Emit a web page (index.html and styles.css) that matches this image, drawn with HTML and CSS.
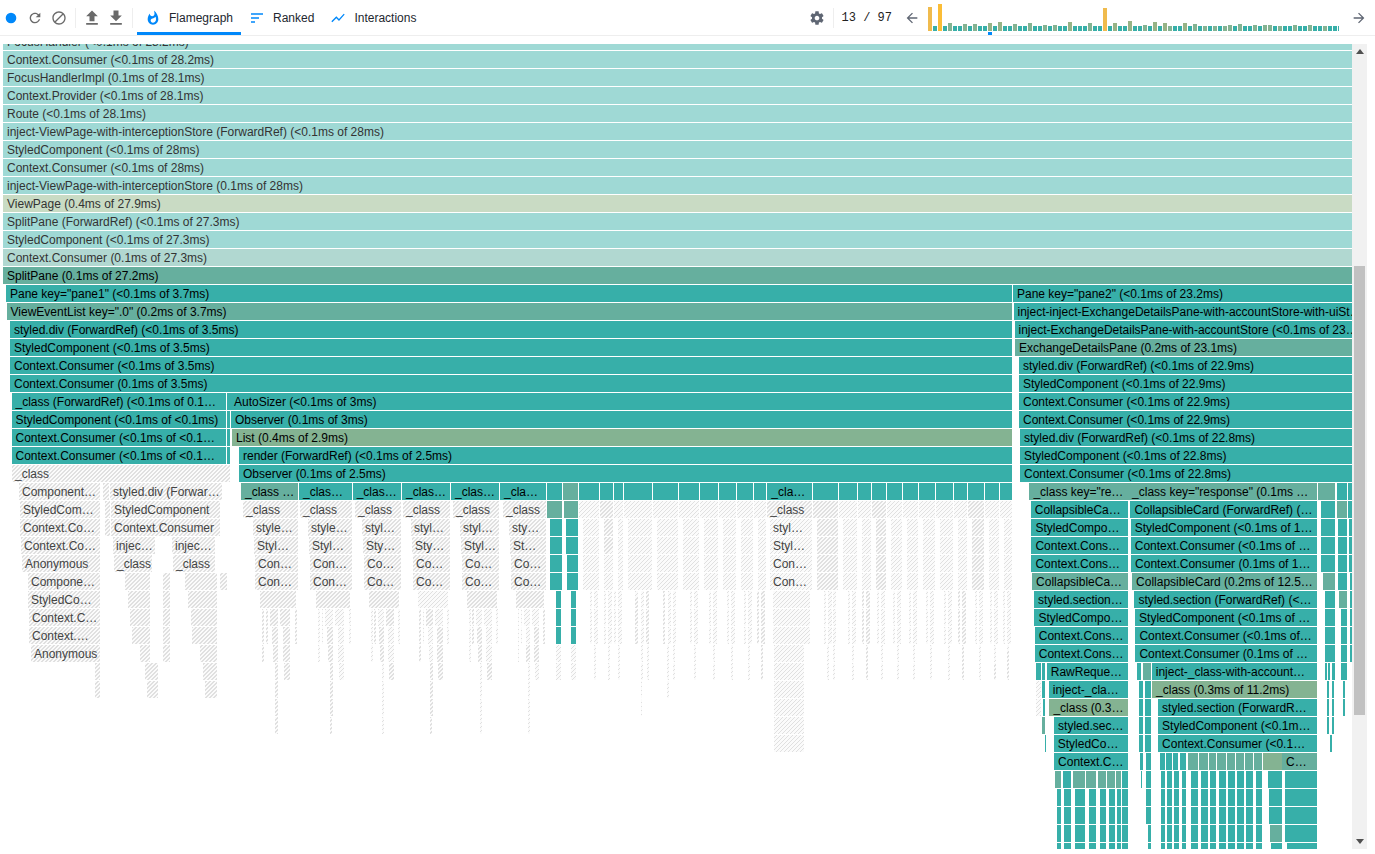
FILE: index.html
```html
<!DOCTYPE html>
<html lang="en">
<head>
<meta charset="utf-8">
<title>Profiler</title>
<link rel="stylesheet" href="styles.css">
</head>
<body>
<div class="app">
  <header class="toolbar">
    <button class="btn btn-first"><svg viewBox="0 0 24 24" class="ic blue"><circle cx="12" cy="12" r="8"/></svg></button>
    <button class="btn"><svg viewBox="0 0 24 24" class="ic gray"><path d="M17.65 6.35C16.2 4.9 14.21 4 12 4c-4.42 0-7.99 3.58-7.99 8s3.57 8 7.99 8c3.73 0 6.84-2.55 7.73-6h-2.08c-.82 2.33-3.04 4-5.65 4-3.31 0-6-2.69-6-6s2.69-6 6-6c1.66 0 3.14.69 4.22 1.78L13 11h7V4l-2.35 2.35z"/></svg></button>
    <button class="btn"><svg viewBox="0 0 24 24" class="ic gray"><path d="M12 2C6.48 2 2 6.48 2 12s4.48 10 10 10 10-4.48 10-10S17.52 2 12 2zM4 12c0-4.42 3.58-8 8-8 1.85 0 3.55.63 4.9 1.69L5.69 16.9C4.63 15.55 4 13.85 4 12zm8 8c-1.85 0-3.55-.63-4.9-1.69L18.31 7.1C19.37 8.45 20 10.15 20 12c0 4.42-3.58 8-8 8z"/></svg></button>
    <span class="sep"></span>
    <button class="btn"><svg viewBox="0 0 24 24" class="ic ic-lg gray"><path d="M9 16h6v-6h4l-7-7-7 7h4zm-4 2h14v2H5z"/></svg></button>
    <button class="btn"><svg viewBox="0 0 24 24" class="ic ic-lg gray"><path d="M19 9h-4V3H9v6H5l7 7 7-7zM5 18v2h14v-2H5z"/></svg></button>
    <span class="sep"></span>
    <div class="tab tab-active"><svg viewBox="0 0 24 24" class="ic blue"><path d="M13.5.67s.74 2.65.74 4.8c0 2.06-1.35 3.73-3.41 3.73-2.07 0-3.63-1.67-3.63-3.73l.03-.36C5.21 7.51 4 10.62 4 14c0 4.42 3.58 8 8 8s8-3.58 8-8C20 8.61 17.41 3.8 13.5.67zM11.71 19c-1.78 0-3.22-1.4-3.22-3.14 0-1.62 1.05-2.76 2.81-3.12 1.77-.36 3.6-1.21 4.62-2.58.39 1.29.59 2.65.59 4.04 0 2.65-2.15 4.8-4.8 4.8z"/></svg><span>Flamegraph</span></div>
    <div class="tab"><svg viewBox="0 0 24 24" class="ic blue"><path d="M3 5h18v2H3zm0 6h12v2H3zm0 6h6v2H3z"/></svg><span>Ranked</span></div>
    <div class="tab"><svg viewBox="0 0 24 24" class="ic blue"><path d="M3.5 18.49l6-6.01 4 4L22 6.92l-1.41-1.41-7.09 7.97-4-4L2 16.99z"/></svg><span>Interactions</span></div>
    <span class="grow"></span>
    <button class="btn"><svg viewBox="0 0 24 24" class="ic slate"><path d="M19.43 12.98c.04-.32.07-.64.07-.98s-.03-.66-.07-.98l2.11-1.65c.19-.15.24-.42.12-.64l-2-3.46c-.12-.22-.39-.3-.61-.22l-2.49 1c-.52-.4-1.08-.73-1.69-.98l-.38-2.65C14.46 2.18 14.25 2 14 2h-4c-.25 0-.46.18-.49.42l-.38 2.65c-.61.25-1.17.59-1.69.98l-2.49-1c-.23-.09-.49 0-.61.22l-2 3.46c-.13.22-.07.49.12.64l2.11 1.65c-.04.32-.07.65-.07.98s.03.66.07.98l-2.11 1.65c-.19.15-.24.42-.12.64l2 3.46c.12.22.39.3.61.22l2.49-1c.52.4 1.08.73 1.69.98l.38 2.65c.03.24.24.42.49.42h4c.25 0 .46-.18.49-.42l.38-2.65c.61-.25 1.17-.59 1.69-.98l2.49 1c.23.09.49 0 .61-.22l2-3.46c.12-.22.07-.49-.12-.64l-2.11-1.65zM12 15.5c-1.93 0-3.5-1.57-3.5-3.5s1.57-3.5 3.5-3.5 3.5 1.57 3.5 3.5-1.57 3.5-3.5 3.5z"/></svg></button>
    <span class="sep"></span>
    <span class="counter">13 / 97</span>
    <button class="btn btn-prev"><svg viewBox="0 0 24 24" class="ic slate"><path d="M20 11H7.83l5.59-5.59L12 4l-8 8 8 8 1.41-1.41L7.83 13H20v-2z"/></svg></button>
    <div class="minimap" id="minimap"><div class="marker"></div></div>
    <button class="btn"><svg viewBox="0 0 24 24" class="ic slate"><path d="M12 4l-1.41 1.41L16.17 11H4v2h12.17l-5.58 5.59L12 20l8-8z"/></svg></button>
  </header>
  <main class="panel">
    <div class="flame"><div class="rows" id="rows"></div></div>
    <div class="scrollbar">
      <span class="arrow arrow-up"></span>
      <span class="thumb"></span>
      <span class="grow"></span>
      <span class="arrow arrow-down"></span>
    </div>
  </main>
</div>
<script src="app.js"></script>
</body>
</html>
```
FILE: styles.css
```css
* { box-sizing: border-box; }
html, body { margin: 0; padding: 0; height: 100%; background: #fff; overflow: hidden; }
body { font-family: "Liberation Sans", Arial, sans-serif; font-size: 12px; color: #000; }
.app { display: flex; flex-direction: column; height: 854px; }
.toolbar { display: flex; align-items: center; height: 36px; flex: none; border-bottom: 1px solid #eee; padding-right: 4px; }
.btn { width: 24px; height: 35px; border: 0; padding: 0; background: none; display: flex; align-items: center; justify-content: center; flex: none; }
.btn-first { margin-left: -1px; }
.btn-prev { margin-right: 4px; }
.ic { width: 16px; height: 16px; flex: none; display: block; }
.ic-lg { width: 20px; height: 20px; }
.ic.blue { fill: #0088fa; }
.ic.gray { fill: #6a6a6a; }
.ic.slate { fill: #5f6673; }
.sep { width: 1px; height: 20px; background: #eee; margin: 0 4px; flex: none; }
.tab { height: 35px; display: flex; align-items: center; padding: 3px 8px 0; gap: 8px; font-size: 12px; color: #23272f; border-bottom: 3px solid transparent; flex: none; }
.tab-active { border-bottom-color: #0088fa; }
.grow { flex: 1; }
.counter { font-family: "Liberation Mono", monospace; font-size: 12px; margin: 0 8px 0 4px; color: #222; white-space: pre; }
.minimap { position: relative; flex: none; width: 419px; height: 35px; display: flex; align-items: flex-end; padding-bottom: 4px; gap: 1px; }
.bar { width: 4px; flex: none; }
.bar-teal { background: #37afa9; }
.bar-sage { background: #84b392; }
.bar-olive { background: #97b386; }
.bar-soft { background: #6fb09c; }
.bar-gold { background: #f0bb4d; }
.bar-amber { background: #fbbd36; }
.bar-thin { width: 1px; }
.marker { position: absolute; left: 60px; bottom: 0; width: 4px; height: 3px; background: #0088fa; }
.panel { display: flex; height: 805px; margin-top: 8px; padding-right: 8px; flex: none; }
.flame { flex: 1; min-width: 0; overflow: hidden; }
.rows { margin-top: -11px; }
.row { position: relative; height: 18px; }
.node { position: absolute; top: 0; height: 17px; line-height: 19px; padding-left: 4px; font-size: 12px; white-space: nowrap; overflow: hidden; }
.k-a { background: #37afa9; }
.k-b { background: #66af9e; }
.k-c { background: #84b392; }
.k-l { background: #9fd9d5; color: #333; }
.k-m { background: #b1d8d1; color: #333; }
.k-n { background: #c9dbc4; color: #333; }
.k-h { padding-left: 3px; color: #444; background: repeating-linear-gradient(-45deg, #e0e0e0 0, #e0e0e0 1px, #fbfbfb 1px, #fbfbfb 2.83px); background-attachment: fixed; }
.scrollbar { width: 15px; flex: none; display: flex; flex-direction: column; background: #f1f1f1; }
.arrow { display: block; width: 0; height: 0; margin: 5px auto; border-left: 4px solid transparent; border-right: 4px solid transparent; flex: none; }
.arrow-up { border-bottom: 5px solid #505050; }
.arrow-down { border-top: 5px solid #505050; }
.thumb { display: block; height: 449px; margin: 207px 2px 0; background: #c1c1c1; flex: none; }
```
FILE: app.js
```js
var rowsData = [];
function add(k, x1, x2, kind, label) {
  (rowsData[k] = rowsData[k] || []).push([x1, x2, kind, label || ""]);
}

/* Full width ancestors */
[
  ["l", "FocusHandler (<0.1ms of 28.2ms)"],
  ["l", "Context.Consumer (<0.1ms of 28.2ms)"],
  ["l", "FocusHandlerImpl (0.1ms of 28.1ms)"],
  ["l", "Context.Provider (<0.1ms of 28.1ms)"],
  ["l", "Route (<0.1ms of 28.1ms)"],
  ["l", "inject-ViewPage-with-interceptionStore (ForwardRef) (<0.1ms of 28ms)"],
  ["l", "StyledComponent (<0.1ms of 28ms)"],
  ["l", "Context.Consumer (<0.1ms of 28ms)"],
  ["l", "inject-ViewPage-with-interceptionStore (0.1ms of 28ms)"],
  ["n", "ViewPage (0.4ms of 27.9ms)"],
  ["l", "SplitPane (ForwardRef) (<0.1ms of 27.3ms)"],
  ["l", "StyledComponent (<0.1ms of 27.3ms)"],
  ["m", "Context.Consumer (0.1ms of 27.3ms)"],
  ["b", "SplitPane (0.1ms of 27.2ms)"]
].forEach(function (r, k) { add(k, 3, 1352, r[0], r[1]); });

/* Two panes */
add(14, 6, 1012, "a", 'Pane key="pane1" (<0.1ms of 3.7ms)');
add(14, 1013, 1352, "a", 'Pane key="pane2" (<0.1ms of 23.2ms)');
add(15, 6.5, 1012, "b", 'ViewEventList key=".0" (0.2ms of 3.7ms)');
add(15, 1013.5, 1352, "a", "inject-inject-ExchangeDetailsPane-with-accountStore-with-uiSt…");
add(16, 10, 1012, "a", "styled.div (ForwardRef) (<0.1ms of 3.5ms)");
add(16, 1014.5, 1352, "a", "inject-ExchangeDetailsPane-with-accountStore (<0.1ms of 23…");
add(17, 10, 1012, "a", "StyledComponent (<0.1ms of 3.5ms)");
add(17, 1015, 1352, "b", "ExchangeDetailsPane (0.2ms of 23.1ms)");
add(18, 10, 1012, "a", "Context.Consumer (<0.1ms of 3.5ms)");
add(18, 1019, 1352, "a", "styled.div (ForwardRef) (<0.1ms of 22.9ms)");
add(19, 10, 1012, "a", "Context.Consumer (0.1ms of 3.5ms)");
add(19, 1019, 1352, "a", "StyledComponent (<0.1ms of 22.9ms)");
add(20, 11.5, 226, "a", "_class (ForwardRef) (<0.1ms of 0.1…");
add(20, 227, 230, "a");
add(20, 230, 1012, "a", "AutoSizer (<0.1ms of 3ms)");
add(20, 1019, 1352, "a", "Context.Consumer (<0.1ms of 22.9ms)");
add(21, 11.5, 226, "a", "StyledComponent (<0.1ms of <0.1ms)");
add(21, 227, 230, "a");
add(21, 231, 1012, "a", "Observer (0.1ms of 3ms)");
add(21, 1019, 1352, "a", "Context.Consumer (<0.1ms of 22.9ms)");
add(22, 11.5, 226, "a", "Context.Consumer (<0.1ms of <0.1…");
add(22, 227, 230, "a");
add(22, 232, 1012, "c", "List (0.4ms of 2.9ms)");
add(22, 1020, 1352, "a", "styled.div (ForwardRef) (<0.1ms of 22.8ms)");
add(23, 11.5, 226, "a", "Context.Consumer (<0.1ms of <0.1…");
add(23, 227, 230, "a");
add(23, 239, 1012, "a", "render (ForwardRef) (<0.1ms of 2.5ms)");
add(23, 1020, 1352, "a", "StyledComponent (<0.1ms of 22.8ms)");
add(24, 12, 230, "h", "_class");
add(24, 239, 1012, "a", "Observer (0.1ms of 2.5ms)");
add(24, 1020, 1352, "a", "Context.Consumer (<0.1ms of 22.8ms)");

/* Left hatched stack */
[
  [25, 19, "Component…", 103, 110, 222, "styled.div (Forwar…"],
  [26, 20, "StyledCom…", 105, 111, 220, "StyledComponent"],
  [27, 20, "Context.Co…", 105, 111, 220, "Context.Consumer"]
].forEach(function (r) {
  add(r[0], r[1], 100, "h", r[2]);
  add(r[0], r[3], r[4] - 1, "h");
  add(r[0], r[4], r[5], "h", r[6]);
});
add(28, 21, 100, "h", "Context.Co…");
add(28, 113, 155, "h", "injec…");
add(28, 172, 215, "h", "injec…");
add(29, 22, 100, "h", "Anonymous");
add(29, 114, 152, "h", "_class");
add(29, 173, 215, "h", "_class");
[
  [30, 28, "Compone…", 125, 185],
  [31, 28, "StyledCo…", 128, 188],
  [32, 29, "Context.C…", 130, 191],
  [33, 29, "Context.…", 132, 192],
  [34, 31, "Anonymous", 140, 200]
].forEach(function (r) {
  add(r[0], r[1], 100, "h", r[2]);
  add(r[0], r[3], 150, "h");
  add(r[0], 163, 170, "h");
  add(r[0], r[4], 217, "h");
});
add(30, 220, 227, "h");
[[35, 145, 203], [36, 147, 205]].forEach(function (r) {
  add(r[0], 95, 100, "h");
  add(r[0], r[1], 158, "h");
  add(r[0], r[2], 217, "h");
});

/* Labelled list items */
var labelled = [
  [241, 298, "_class …", 243, 253, "style…", "Styl…", "Con…", "Con…"],
  [299, 351.7, "_clas…", 300, 308, "style…", "Styl…", "Con…", "Con…"],
  [352.7, 401, "_clas…", 355, 362, "styl…", "Sty…", "Co…", "Co…"],
  [402, 450, "_clas…", 403, 411, "styl…", "Sty…", "Co…", "Co…"],
  [451, 499, "_clas…", 453, 460, "styl…", "Styl…", "Co…", "Co…"],
  [500, 545.7, "_cla…", 503, 509, "sty…", "St…", "Co…", "Co…"]
];
var pat = [
  [[17, 53]],
  [[19, 21], [23, 25], [27, 35], [37, 47], [52, 54]],
  [[19, 21], [23, 25], [29, 35], [40, 47], [52, 54]],
  [[19, 21], [30, 35], [40, 47]],
  [[32, 35], [41, 47]],
  [[32, 35]],
  [[32, 35]],
  [[32, 34.5]]
];
labelled.forEach(function (c) {
  add(25, c[0], c[1], c === labelled[0] ? "b" : "a", c[2]);
  add(26, c[3], c[1], "h", "_class");
  add(27, c[4], c[1], "h", c[5]);
  add(28, c[4] + 1, c[1], "h", c[6]);
  add(29, c[4] + 2, c[1], "h", c[7]);
  add(30, c[4] + 2, c[1], "h", c[8]);
  var scale = (c[1] - c[3]) / 55;
  pat.forEach(function (strips, i) {
    strips.forEach(function (s) {
      add(31 + i, c[3] + s[0] * scale, c[3] + s[1] * scale, "h");
    });
  });
});

/* Two committed columns in the list */
[[546.7, 561.7, 549.5, 556, 560.7], [562.7, 577.7, 566, 570.7, 575.7]].forEach(function (c, i) {
  add(25, c[0], c[1], i ? "b" : "a");
  add(26, i ? 564 : 547, c[1], "b");
  for (var k = 27; k <= 30; k++) add(k, c[2] + (k > 28 ? 0.7 : 0), c[1], "a");
  for (k = 31; k <= 33; k++) add(k, c[3], c[4], "a");
  for (k = 34; k <= 35; k++) add(k, c[3], c[4], "h");
});

/* Unlabelled teal columns with did-not-render children */
[
  [578.7, 599], [600, 612.7], [613.7, 622.7], [623.7, 651.7], [652.7, 678],
  [679, 698.7], [699.7, 717.7], [718.7, 735.7], [736.7, 752.7], [753.7, 766.3],
  [813.3, 838], [839, 857], [858, 871.3], [872.3, 885.7], [886.7, 901.7],
  [902.7, 917.7], [918.7, 935], [936, 953], [954, 967.3], [968.3, 983.7],
  [984.7, 998.7], [999.7, 1011.7]
].forEach(function (c, i) {
  var w = c[1] - c[0], x2 = c[1], k;
  add(25, c[0], x2, "a");
  add(26, c[0], x2, "h");
  for (k = 27; k <= 30; k++) add(k, c[0] + 4, x2, "h");
  for (k = 31; k <= 33; k++) {
    if (w >= 24) {
      add(k, c[0] + w * 0.42, c[0] + w * 0.5, "h");
      add(k, c[0] + w * 0.6, c[0] + w * 0.74, "h");
      add(k, c[0] + w * 0.8, c[0] + w * 0.92, "h");
    } else {
      add(k, x2 - 9, x2 - 7, "h");
      add(k, x2 - 5, x2 - 1, "h");
    }
  }
  for (k = 34; k <= 35; k++) {
    add(k, x2 - 5, x2 - 3, "h");
    if (w >= 24) add(k, x2 - 11, x2 - 9, "h");
  }
  if (i === 3 || i === 4) { add(36, x2 - 11, x2 - 9.5, "h"); }
  if (i === 3) { add(37, x2 - 11, x2 - 9.5, "h"); }
});

/* Labelled column in the middle */
add(25, 767.3, 812.3, "a", "_cla…");
add(26, 767.3, 812.3, "h", "_class");
add(27, 770, 812, "h", "styl…");
add(28, 770, 812, "h", "Styl…");
add(29, 770, 812, "h", "Con…");
add(30, 770, 812, "h", "Con…");
for (var m = 31; m <= 33; m++) add(m, 773, 810, "h");
for (m = 34; m <= 39; m++) add(m, 774, 804, "h");

/* Right side */
function rx(v) { return 1020 + v / 3; }
function rr(k, list, kind) {
  list.forEach(function (s) {
    add(k, rx(s[0]) - (s[3] ? 0.6 : 0), rx(s[1]), s[2] || kind || "a", s[3]);
  });
}
rr(25, [[30, 323, "b", '_class key="re…'], [326, 890, "b", '_class key="response" (0.1ms …'], [893, 945, "b"], [950, 980], [983, 996]]);
rr(26, [[34, 323, "a", "CollapsibleCa…"], [333, 890, "a", "CollapsibleCard (ForwardRef) (…"], [904, 945], [950, 980, "b"], [985, 996]]);
rr(27, [[36, 323, "a", "StyledCompo…"], [334, 890, "a", "StyledComponent (<0.1ms of 1…"], [904, 945], [955, 980], [988, 996]]);
rr(28, [[36, 323, "a", "Context.Cons…"], [334, 890, "a", "Context.Consumer (<0.1ms of …"], [904, 945], [955, 980], [988, 996]]);
rr(29, [[36, 323, "a", "Context.Cons…"], [335, 890, "a", "Context.Consumer (0.1ms of 1…"], [904, 945], [955, 980], [988, 996]]);
rr(30, [[38, 323, "b", "CollapsibleCa…"], [338, 890, "b", "CollapsibleCard (0.2ms of 12.5…"], [908, 945, "b"], [955, 980], [990, 996]]);
rr(31, [[44, 323, "a", "styled.section…"], [345, 890, "a", "styled.section (ForwardRef) (<…"], [914, 945], [958, 980, "b"], [990, 996]]);
rr(32, [[45, 323, "a", "StyledCompo…"], [347, 890, "a", "StyledComponent (<0.1ms of …"], [915, 945], [963, 980], [990, 996]]);
rr(33, [[46, 323, "a", "Context.Cons…"], [348, 890, "a", "Context.Consumer (<0.1ms of…"], [915, 945], [963, 980], [990, 996]]);
rr(34, [[46, 323, "a", "Context.Cons…"], [348, 890, "a", "Context.Consumer (0.1ms of …"], [915, 945], [963, 980], [990, 996]]);
rr(35, [[48, 62], [66, 76], [82, 323, "a", "RawReque…"], [352, 362], [368, 392, "b"], [397, 890, "a", "inject-_class-with-account…"], [916, 920], [925, 930], [935, 945], [963, 980]]);
rr(36, [[48, 64, "h"], [66, 76], [88, 323, "a", "inject-_cla…"], [358, 368], [376, 392], [398, 890, "c", "_class (0.3ms of 11.2ms)"], [922, 928], [935, 942], [968, 975]]);
rr(37, [[48, 64, "h"], [68, 76], [90, 323, "c", "_class (0.3…"], [358, 368], [376, 392], [416, 890, "a", "styled.section (ForwardR…"], [922, 928], [935, 942], [970, 975]]);
rr(38, [[66, 74, "b"], [104, 323, "a", "styled.sec…"], [358, 368], [376, 392], [416, 890, "a", "StyledComponent (<0.1m…"], [922, 928], [935, 942]]);
rr(39, [[75, 78], [103, 323, "a", "StyledCo…"], [358, 368], [376, 392], [416, 890, "a", "Context.Consumer (<0.1…"], [930, 935]]);
rr(40, [[104, 323, "a", "Context.C…"], [360, 368], [378, 392], [420, 434], [437, 455], [459, 475], [479, 499],
  [503, 533, "b"], [536, 563, "b"], [566, 587, "b"], [590, 617, "b"], [620, 644, "b"], [647, 671, "b"], [674, 698, "b"], [701, 727, "b"],
  [730, 785, "c"], [788, 890, "b", "C…"]]);
rr(41, [[106, 123, "b"], [128, 154], [158, 195, "b"], [198, 229, "b"], [233, 259, "b"], [262, 284, "b"], [288, 303, "b"], [306, 323],
  [362, 365], [378, 392], [423, 435], [442, 456], [463, 478], [485, 498], [512, 534], [543, 563], [570, 589], [598, 617], [625, 644], [652, 671], [679, 698], [707, 727], [745, 785], [795, 890]]);
var lowerLeft = [[110, 123], [131, 154], [164, 195], [206, 229], [239, 259], [268, 284], [291, 303], [307, 323]];
var lowerRight = [[423, 435], [442, 456], [463, 478], [485, 498], [512, 534], [543, 563], [570, 589], [598, 617], [625, 644], [652, 671], [679, 698], [707, 727]];
[42, 43, 44, 45].forEach(function (k) {
  rr(k, lowerLeft);
  rr(k, lowerRight);
  rr(k, [k < 44 ? [378, 392] : [385, 392]]);
  rr(k, [k === 44 ? [750, 785, "b"] : k === 45 ? [753, 785] : [747, 785]]);
  rr(k, [k === 45 ? [800, 890] : [795, 890]]);
});

/* Render rows */
var rowsEl = document.getElementById("rows");
rowsData.forEach(function (row) {
  var r = document.createElement("div");
  r.className = "row";
  row.forEach(function (n) {
    var d = document.createElement("div");
    d.className = "node k-" + n[2];
    d.style.left = n[0] + "px";
    d.style.width = (n[1] - n[0]) + "px";
    if (n[3]) d.textContent = n[3];
    else d.style.padding = "0";
    r.appendChild(d);
  });
  rowsEl.appendChild(r);
});

/* Commit minimap: height and colour per commit */
var t = "bar-teal", s = "bar-sage", o = "bar-olive";
var bars = [
  [24, "bar-gold"], [5, t], [27, "bar-amber"], [5, t], [8, s], [5, t], [5, t], [7, s], [5, t], [7, s], [5, t], [5, t], [8, o], [5, t],
  [9, o], [5, t], [5, t], [7, s], [5, t], [5, t], [8, s], [5, t], [5, t], [6, s], [5, t], [6, s], [5, t], [5, t], [9, o], [5, t], [5, t], [5, t],
  [8, s], [5, t], [5, t], [23, "bar-gold"], [5, t], [8, o], [5, t], [5, t], [10, o], [5, t], [5, t], [6, s], [5, t], [9, o], [5, t], [8, o],
  [5, s], [5, t], [5, t], [8, o], [5, t], [7, s], [5, t], [5, s], [5, t], [5, s], [5, t], [5, s], [6, s], [5, t], [7, s], [5, t], [5, t], [6, s],
  [5, t], [6, s], [6, s], [5, t], [5, s], [5, t], [5, t], [6, s], [5, t], [5, t], [6, s], [5, t], [5, t], [5, s], [5, t], [5, t]
];
var mm = document.getElementById("minimap");
bars.forEach(function (b) {
  var d = document.createElement("div");
  d.className = "bar " + b[1];
  d.style.height = b[0] + "px";
  mm.appendChild(d);
});
var thin = document.createElement("div");
thin.className = "bar bar-thin bar-teal";
thin.style.height = "5px";
mm.appendChild(thin);
```
